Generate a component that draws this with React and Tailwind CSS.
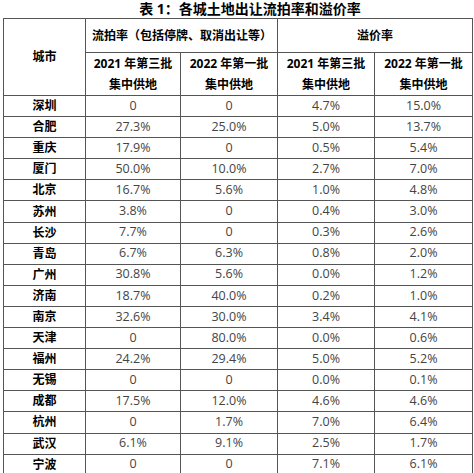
const rows = [
  ["深圳", "0", "0", "4.7%", "15.0%"],
  ["合肥", "27.3%", "25.0%", "5.0%", "13.7%"],
  ["重庆", "17.9%", "0", "0.5%", "5.4%"],
  ["厦门", "50.0%", "10.0%", "2.7%", "7.0%"],
  ["北京", "16.7%", "5.6%", "1.0%", "4.8%"],
  ["苏州", "3.8%", "0", "0.4%", "3.0%"],
  ["长沙", "7.7%", "0", "0.3%", "2.6%"],
  ["青岛", "6.7%", "6.3%", "0.8%", "2.0%"],
  ["广州", "30.8%", "5.6%", "0.0%", "1.2%"],
  ["济南", "18.7%", "40.0%", "0.2%", "1.0%"],
  ["南京", "32.6%", "30.0%", "3.4%", "4.1%"],
  ["天津", "0", "80.0%", "0.0%", "0.6%"],
  ["福州", "24.2%", "29.4%", "5.0%", "5.2%"],
  ["无锡", "0", "0", "0.0%", "0.1%"],
  ["成都", "17.5%", "12.0%", "4.6%", "4.6%"],
  ["杭州", "0", "1.7%", "7.0%", "6.4%"],
  ["武汉", "6.1%", "9.1%", "2.5%", "1.7%"],
  ["宁波", "0", "0", "7.1%", "6.1%"],
];

const font = { fontFamily: '"Open Sans", "Noto Sans CJK SC", sans-serif' };

const App = () => {
  return (
    <div className="w-[474px] h-[473px] overflow-hidden bg-white" style={font}>
      <h2 className="h-[18px] pl-[26px] text-center text-[14px] leading-[18px] font-bold text-black">
        表 1：各城土地出让流拍率和溢价率
      </h2>

      <table className="ml-[3px] w-[469px] table-fixed border-collapse text-center">
        <colgroup>
          <col className="w-[82px]" />
          <col className="w-[95px]" />
          <col className="w-[97px]" />
          <col className="w-[97px]" />
          <col className="w-[98px]" />
        </colgroup>
        <thead className="text-[12px] font-bold text-black">
          <tr className="h-[34px]">
            <th rowSpan={2} className="border border-[#555]">城市</th>
            <th colSpan={2} className="border border-[#555] text-left pl-[6px]">
              流拍率（包括停牌、取消出让等）
            </th>
            <th colSpan={2} className="border border-[#555]">溢价率</th>
          </tr>
          <tr className="h-[42px] leading-[21px]">
            <th className="border border-[#555]">2021 年第三批<br />集中供地</th>
            <th className="border border-[#555]">2022 年第一批<br />集中供地</th>
            <th className="border border-[#555]">2021 年第三批<br />集中供地</th>
            <th className="border border-[#555]">2022 年第一批<br />集中供地</th>
          </tr>
        </thead>
        <tbody className="text-[12.5px]">
          {rows.map((r) => (
            <tr key={r[0]} className="h-[21.1px]">
              <td className="border border-[#555] font-bold text-[12px] text-black">{r[0]}</td>
              {r.slice(1).map((v, i) => (
                <td key={i} className="border border-[#555] text-[#444]">{v}</td>
              ))}
            </tr>
          ))}
        </tbody>
      </table>
    </div>
  );
};

export default App;
